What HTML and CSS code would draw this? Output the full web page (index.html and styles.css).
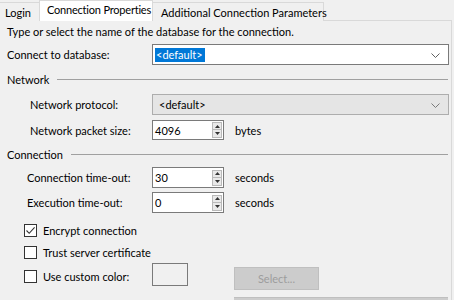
FILE: index.html
```html
<!DOCTYPE html>
<html>
<head>
<meta charset="utf-8">
<link rel="stylesheet" href="styles.css">
</head>
<body>
<div class="tabs">
  <div class="tab">Login</div>
  <div class="tab active">Connection Properties</div>
  <div class="tab">Additional Connection Parameters</div>
</div>
<div class="panel">
  <div class="intro">Type or select the name of the database for the connection.</div>
  <div class="row r-db">
    <div class="label">Connect to database:</div>
    <div class="combo">
      <span class="sel">&lt;default&gt;</span>
      <svg class="chev" width="9" height="5" viewBox="0 0 9 5"><path d="M0.5 0.5 L4.5 4.5 L8.5 0.5" fill="none" stroke="#606060" stroke-width="1"/></svg>
    </div>
  </div>
  <div class="group g-net"><span>Network</span><div class="rule"></div></div>
  <div class="row r-proto">
    <div class="label ind-net">Network protocol:</div>
    <div class="combo disabled">
      <span class="val">&lt;default&gt;</span>
      <svg class="chev" width="9" height="5" viewBox="0 0 9 5"><path d="M0.5 0.5 L4.5 4.5 L8.5 0.5" fill="none" stroke="#7a7a7a" stroke-width="1"/></svg>
    </div>
  </div>
  <div class="row r-packet">
    <div class="label ind-net">Network packet size:</div>
    <div class="spin">
      <span class="num">4096</span>
      <div class="btns">
        <div class="sb"><svg width="5" height="3" viewBox="0 0 5 3"><path d="M2.5 0 L5 3 L0 3 Z" fill="#333"/></svg></div>
        <div class="sb"><svg width="5" height="3" viewBox="0 0 5 3"><path d="M0 0 L5 0 L2.5 3 Z" fill="#333"/></svg></div>
      </div>
    </div>
    <div class="unit">bytes</div>
  </div>
  <div class="group g-conn"><span>Connection</span><div class="rule"></div></div>
  <div class="row r-ct">
    <div class="label ind-conn">Connection time-out:</div>
    <div class="spin">
      <span class="num">30</span>
      <div class="btns">
        <div class="sb"><svg width="5" height="3" viewBox="0 0 5 3"><path d="M2.5 0 L5 3 L0 3 Z" fill="#333"/></svg></div>
        <div class="sb"><svg width="5" height="3" viewBox="0 0 5 3"><path d="M0 0 L5 0 L2.5 3 Z" fill="#333"/></svg></div>
      </div>
    </div>
    <div class="unit">seconds</div>
  </div>
  <div class="row r-et">
    <div class="label ind-conn">Execution time-out:</div>
    <div class="spin">
      <span class="num">0</span>
      <div class="btns">
        <div class="sb"><svg width="5" height="3" viewBox="0 0 5 3"><path d="M2.5 0 L5 3 L0 3 Z" fill="#333"/></svg></div>
        <div class="sb"><svg width="5" height="3" viewBox="0 0 5 3"><path d="M0 0 L5 0 L2.5 3 Z" fill="#333"/></svg></div>
      </div>
    </div>
    <div class="unit">seconds</div>
  </div>
  <div class="check c-enc">
    <div class="box"><svg width="11" height="11" viewBox="0 0 11 11"><path d="M1.5 5.5 L4.2 8.3 L9.6 2.4" fill="none" stroke="#333" stroke-width="1.1"/></svg></div>
    <span>Encrypt connection</span>
  </div>
  <div class="check c-trust">
    <div class="box"></div>
    <span>Trust server certificate</span>
  </div>
  <div class="row r-color">
    <div class="check c-color">
      <div class="box"></div>
      <span>Use custom color:</span>
    </div>
    <div class="swatch"></div>
    <div class="btn-select">Select...</div>
  </div>
  <div class="bottom-row"><div class="bar"></div></div>
</div>
</body>
</html>
```
FILE: styles.css
```css
* { box-sizing: border-box; }
html, body {
  margin: 0;
  padding: 0;
  width: 454px;
  height: 300px;
  overflow: hidden;
  background: #f0f0f0;
  font-family: Lato, "Liberation Sans", sans-serif;
  font-size: 11px;
  color: #000;
}
.tabs {
  display: flex;
  align-items: flex-end;
  height: 21px;
  position: relative;
  z-index: 1;
}
.tab {
  height: 19px;
  padding: 3px 0 0 5px;
  border: 1px solid #d9d9d9;
  border-bottom: none;
  background: #f0f0f0;
  line-height: 14px;
  white-space: nowrap;
}
.tab:first-child { width: 40px; border-left: none; padding-left: 5px; }
.tab.active {
  height: 21px;
  width: 114px;
  padding: 2px 0 0 7px;
  background: #ffffff;
  margin: 0 -1px;
  position: relative;
  z-index: 2;
  letter-spacing: -0.2px;
}
.tab:last-child { width: 172px; padding-left: 8px; }
.panel {
  margin-top: -1px;
  width: 452px;
  height: 290px;
  border: 1px solid #d9d9d9;
  border-left: none;
  border-bottom: none;
  padding-left: 7px;
}
.intro { margin-top: 3px; height: 15px; line-height: 15px; }
.row { display: flex; align-items: center; }
.label { width: 145px; flex: none; }
.ind-net { padding-left: 23px; }
.ind-conn { padding-left: 20px; }
.r-db { margin-top: 5px; height: 21px; }
.combo {
  width: 297px;
  height: 21px;
  border: 1px solid #7a7a7a;
  background: #fff;
  display: flex;
  align-items: center;
  padding-left: 2px;
  position: relative;
}
.combo .sel {
  background: #0078d7;
  color: #fff;
  padding: 0 2px 0 1px;
  height: 14px;
  line-height: 14px;
}
.combo .val { padding-left: 4px; }
.combo.disabled { background: #e5e5e5; border-color: #adadad; }
.chev { position: absolute; right: 8px; top: 8px; }
.group { display: flex; align-items: center; height: 13px; line-height: 13px; }
.group .rule { flex: 1; height: 1px; background: #a0a0a0; margin-left: 8px; margin-right: 3px; }
.g-net { margin-top: 8px; }
.r-proto { margin-top: 8px; height: 21px; }
.r-packet { margin-top: 5px; height: 20px; }
.spin {
  width: 72px;
  height: 20px;
  border: 1px solid #7a7a7a;
  background: #fff;
  display: flex;
  align-items: center;
  padding-left: 2px;
}
.r-ct .spin, .r-et .spin { height: 21px; }
.spin .num { flex: 1; }
.btns {
  display: flex;
  flex-direction: column;
  margin-right: 1px;
}
.sb {
  width: 10px;
  height: 8px;
  border: 1px solid #b9b9b9;
  background: #e9e9e9;
  display: flex;
  align-items: center;
  justify-content: center;
}
.sb + .sb { border-top: none; }
.unit { margin-left: 11px; }
.g-conn { margin-top: 8px; }
.r-ct { margin-top: 6px; height: 21px; }
.r-et { margin-top: 4px; height: 21px; }
.check { display: flex; align-items: center; height: 15px; padding-left: 17px; }
.box {
  width: 13px;
  height: 13px;
  border: 1px solid #333;
  background: #fff;
  margin-right: 6px;
  display: flex;
  align-items: center;
  justify-content: center;
}
.c-enc { margin-top: 10px; }
.c-trust { margin-top: 7px; }
.r-color { margin-top: 3px; height: 28px; align-items: flex-start; }
.c-color { width: 145px; margin-top: 6px; }
.swatch {
  width: 36px;
  height: 23px;
  border: 1px solid #7a7a7a;
  background: #f0f0f0;
}
.btn-select {
  margin-left: 46px;
  margin-top: 4px;
  width: 85px;
  height: 23px;
  background: #cccccc;
  border: 1px solid #bfbfbf;
  color: #9d9d9d;
  text-align: center;
  line-height: 21px;
}
.bottom-row { display: flex; padding-left: 227px; margin-top: 6px; }
.bar { width: 214px; height: 4px; background: #cccccc; border-top: 1px solid #bfbfbf; }
```
